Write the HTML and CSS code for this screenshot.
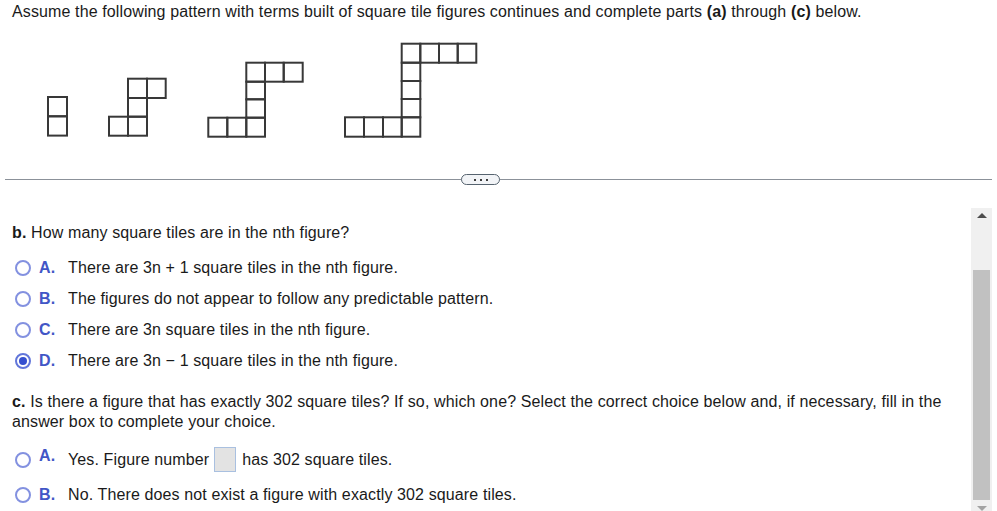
FILE: index.html
```html
<!DOCTYPE html>
<html>
<head>
<meta charset="utf-8">
<link rel="stylesheet" href="styles.css">
</head>
<body>
<p class="intro">Assume the following pattern with terms built of square tile figures continues and complete parts <b>(a)</b> through <b>(c)</b> below.</p>
<svg class="figures" width="500" height="115" viewBox="0 30 500 115" xmlns="http://www.w3.org/2000/svg">
  <g fill="none" stroke="#383838" stroke-width="2">
    <rect x="48" y="97" width="19" height="19.3"/>
    <rect x="48" y="116.3" width="19" height="19.3"/>
    <rect x="109" y="116.7" width="19" height="19"/>
    <rect x="128" y="116.7" width="19" height="19"/>
    <rect x="128" y="98" width="19" height="18.7"/>
    <rect x="128" y="78.7" width="19" height="19.3"/>
    <rect x="147" y="78.7" width="18.7" height="19.3"/>
    <rect x="208.3" y="117.7" width="19" height="19"/>
    <rect x="227.3" y="117.7" width="19" height="19"/>
    <rect x="246.3" y="117.7" width="18.7" height="19"/>
    <rect x="246.3" y="99.3" width="18.7" height="18.4"/>
    <rect x="246.3" y="81.7" width="18.7" height="17.6"/>
    <rect x="246.3" y="62.7" width="18.7" height="19"/>
    <rect x="265" y="62.7" width="18.7" height="19"/>
    <rect x="283.7" y="62.7" width="19" height="19"/>
    <rect x="345" y="117.3" width="19" height="19.4"/>
    <rect x="364" y="117.3" width="19" height="19.4"/>
    <rect x="383" y="117.3" width="18.7" height="19.4"/>
    <rect x="401.7" y="117.3" width="18.6" height="19.4"/>
    <rect x="401.7" y="99" width="18.6" height="18.3"/>
    <rect x="401.7" y="81" width="18.6" height="18"/>
    <rect x="401.7" y="62.7" width="18.6" height="18.3"/>
    <rect x="401.7" y="43.7" width="18.6" height="19"/>
    <rect x="420.3" y="43.7" width="18.7" height="19"/>
    <rect x="439" y="43.7" width="18.7" height="19"/>
    <rect x="457.7" y="43.7" width="18.6" height="19"/>
  </g>
</svg>
<div class="divider">
  <span class="pill"><i></i><i></i><i></i></span>
</div>
<div class="main">
  <div class="content">
    <p class="question"><b>b.</b> How many square tiles are in the nth figure?</p>
    <ul class="options">
      <li class="option"><span class="radio"></span><span class="letter">A.</span><span>There are 3n + 1 square tiles in the nth figure.</span></li>
      <li class="option"><span class="radio"></span><span class="letter">B.</span><span>The figures do not appear to follow any predictable pattern.</span></li>
      <li class="option"><span class="radio"></span><span class="letter">C.</span><span>There are 3n square tiles in the nth figure.</span></li>
      <li class="option"><span class="radio checked"></span><span class="letter">D.</span><span>There are 3n &minus; 1 square tiles in the nth figure.</span></li>
    </ul>
    <p class="question question-c"><b>c.</b> Is there a figure that has exactly 302 square tiles? If so, which one? Select the correct choice below and, if necessary, fill in the answer box to complete your choice.</p>
    <ul class="options options-c">
      <li class="option tall"><span class="radio"></span><span class="letter raised">A.</span><span class="with-box">Yes. Figure number<span class="answer-box"></span>has 302 square tiles.</span></li>
      <li class="option tall"><span class="radio"></span><span class="letter">B.</span><span>No. There does not exist a figure with exactly 302 square tiles.</span></li>
    </ul>
  </div>
  <div class="scrollbar">
    <div class="sb-up"><span class="tri-up"></span></div>
    <div class="sb-track"><div class="sb-thumb"></div><div class="sb-down"><span class="tri-down"></span></div></div>
  </div>
</div>
</body>
</html>
```
FILE: styles.css
```css
html, body {
  margin: 0;
  padding: 0;
  background: #fff;
}
body {
  font-family: "Liberation Sans", Arial, sans-serif;
  font-size: 16px;
  letter-spacing: 0.12px;
  color: #1a1a1a;
  width: 997px;
  height: 511px;
  overflow: hidden;
}
.intro {
  margin: 0;
  padding: 3px 12px 0;
  line-height: 17px;
}
.figures {
  display: block;
  margin-top: 10px;
}
.divider {
  position: relative;
  margin: 34px 5px 0;
  height: 1px;
  background: #8b9199;
}
.pill {
  position: absolute;
  left: 456px;
  top: -5px;
  width: 37px;
  height: 9px;
  border: 1px solid #56636f;
  border-radius: 6px;
  background: #f2f4f7;
  display: flex;
  justify-content: center;
  align-items: center;
  gap: 4px;
}
.pill i {
  display: block;
  width: 2px;
  height: 2px;
  background: #3c3c3c;
}
.main {
  display: flex;
  margin-top: 28px;
  height: 303px;
  padding-right: 5px;
}
.content {
  flex: 1;
  padding: 15px 14px 0 12px;
}
.question {
  margin: 0;
  line-height: 20px;
}
.options {
  list-style: none;
  margin: 9px 0 0;
  padding: 0;
}
.option {
  display: flex;
  align-items: center;
  height: 31px;
  line-height: 20px;
}
.option.tall {
  height: 35px;
}
.radio {
  box-sizing: border-box;
  width: 16px;
  height: 16px;
  margin-left: 3px;
  margin-right: 8px;
  border: 2px solid #8391e0;
  border-radius: 50%;
  display: flex;
  align-items: center;
  justify-content: center;
  flex: none;
}
.radio.checked {
  border-color: #6276da;
}
.radio.checked::after {
  content: "";
  width: 8px;
  height: 8px;
  border-radius: 50%;
  background: #3650cf;
}
.letter {
  width: 29px;
  font-weight: bold;
  color: #4256c6;
  flex: none;
}
.letter.raised {
  align-self: flex-start;
  margin-top: 4px;
}
.question-c {
  margin-top: 16px;
}
.options-c {
  margin-top: 10px;
}
.with-box {
  display: flex;
  align-items: center;
}
.answer-box {
  display: inline-block;
  box-sizing: border-box;
  width: 22px;
  height: 25px;
  margin: 0 6px 0 5px;
  background: #e3e3e3;
  border: 1px solid #a9c0e0;
}
.scrollbar {
  width: 21px;
  background: #f0f0f0;
  display: flex;
  flex-direction: column;
}
.sb-up {
  height: 17px;
  display: flex;
  justify-content: center;
  align-items: center;
}
.tri-up {
  width: 0;
  height: 0;
  border-left: 5px solid transparent;
  border-right: 5px solid transparent;
  border-bottom: 5px solid #4d4d4d;
}
.sb-track {
  flex: 1;
  padding-top: 47px;
  display: flex;
  flex-direction: column;
  align-items: center;
}
.sb-thumb {
  width: 17px;
  height: 230px;
  background: #c1c1c1;
}
.sb-down {
  margin-top: 6px;
  display: flex;
  justify-content: center;
}
.tri-down {
  width: 0;
  height: 0;
  border-left: 5px solid transparent;
  border-right: 5px solid transparent;
  border-top: 5px solid #a3a3a3;
}
```
